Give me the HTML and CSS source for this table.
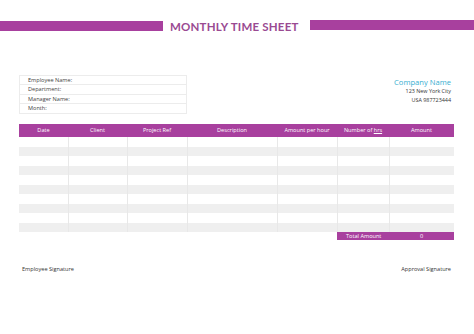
FILE: index.html
```html
<!DOCTYPE html>
<html>
<head>
<meta charset="utf-8">
<link rel="stylesheet" href="styles.css">
</head>
<body>
<div class="page">
  <header class="head">
    <div class="bar bar-left"></div>
    <h1 class="title">MONTHLY TIME SHEET</h1>
    <div class="bar bar-right"></div>
  </header>

  <section class="info">
    <div class="info-box">
      <div class="info-row">Employee Name:</div>
      <div class="info-row">Department:</div>
      <div class="info-row">Manager Name:</div>
      <div class="info-row">Month:</div>
    </div>
    <div class="company">
      <div class="company-name">Company Name</div>
      <div class="company-line">123 New York City</div>
      <div class="company-line">USA 987723444</div>
    </div>
  </section>

  <table class="sheet">
    <colgroup>
      <col class="c-date"><col class="c-client"><col class="c-proj"><col class="c-desc"><col class="c-rate"><col class="c-hrs"><col class="c-amt">
    </colgroup>
    <thead>
      <tr>
        <th>Date</th><th>Client</th><th>Project Ref</th><th>Description</th><th>Amount per hour</th><th>Number of <span class="squig">hrs</span></th><th>Amount</th>
      </tr>
    </thead>
    <tbody>
      <tr><td></td><td></td><td></td><td></td><td></td><td></td><td></td></tr>
      <tr><td></td><td></td><td></td><td></td><td></td><td></td><td></td></tr>
      <tr><td></td><td></td><td></td><td></td><td></td><td></td><td></td></tr>
      <tr><td></td><td></td><td></td><td></td><td></td><td></td><td></td></tr>
      <tr><td></td><td></td><td></td><td></td><td></td><td></td><td></td></tr>
      <tr><td></td><td></td><td></td><td></td><td></td><td></td><td></td></tr>
      <tr><td></td><td></td><td></td><td></td><td></td><td></td><td></td></tr>
      <tr><td></td><td></td><td></td><td></td><td></td><td></td><td></td></tr>
      <tr><td></td><td></td><td></td><td></td><td></td><td></td><td></td></tr>
      <tr><td></td><td></td><td></td><td></td><td></td><td></td><td></td></tr>
    </tbody>
    <tfoot>
      <tr class="total">
        <td class="blank" colspan="5"></td>
        <td class="total-label">Total Amount</td>
        <td class="total-val">0</td>
      </tr>
    </tfoot>
  </table>

  <footer class="signs">
    <span>Employee Signature</span>
    <span>Approval Signature</span>
  </footer>
</div>
</body>
</html>
```

FILE: styles.css
```css
html, body {
  margin: 0;
  padding: 0;
  background: #ffffff;
}

.page {
  width: 474px;
  height: 334px;
  font-family: "Open Sans", "Liberation Sans", sans-serif;
  color: #333333;
}

.head {
  display: flex;
  align-items: flex-start;
  padding-top: 19px;
  height: 14px;
}

.bar {
  background: #a8409e;
  height: 10.5px;
}

.bar-left {
  width: 163px;
  margin-top: 1.5px;
}

.bar-right {
  flex: 1;
  margin-top: 0.5px;
}

.title {
  margin: 0;
  padding: 0 0 0 7px;
  width: 140px;
  font-family: Lato, "Open Sans", sans-serif;
  font-weight: 700;
  font-size: 11.5px;
  line-height: 13px;
  color: #9a4a92;
  letter-spacing: 0.2px;
  white-space: nowrap;
  margin-top: 0.5px;
}

.info {
  display: flex;
  justify-content: space-between;
  align-items: flex-start;
  margin-top: 42px;
  padding: 0 23px 0 19px;
}

.info-box {
  width: 168px;
  border: 1px solid #ececec;
  border-bottom: none;
  box-sizing: border-box;
}

.info-row {
  height: 9.4px;
  line-height: 9.4px;
  font-size: 5.6px;
  padding-left: 8px;
  border-bottom: 1px solid #ececec;
  box-sizing: border-box;
  color: #444444;
}

.company {
  text-align: right;
  margin-top: 2px;
}

.company-name {
  font-size: 7.6px;
  line-height: 10px;
  color: #36aed0;
}

.company-line {
  font-size: 5.4px;
  line-height: 9px;
  color: #333333;
}

.sheet {
  margin: 10px 0 0 19px;
  width: 435px;
  border-collapse: collapse;
  table-layout: fixed;
}

.c-date { width: 49px; }
.c-client { width: 59px; }
.c-proj { width: 60px; }
.c-desc { width: 90px; }
.c-rate { width: 60px; }
.c-hrs { width: 52px; }
.c-amt { width: 65px; }

.sheet th {
  background: #a8409e;
  color: #ffffff;
  font-weight: 400;
  font-size: 5.6px;
  height: 13.5px;
  padding: 0;
  text-align: center;
  white-space: nowrap;
}

.squig {
  text-decoration: underline;
}

.sheet tbody td {
  height: 9.5px;
  padding: 0;
  border-left: 1px solid #e8e8e8;
  box-sizing: border-box;
}

.sheet tbody td:first-child {
  border-left: none;
}

.sheet tbody tr:nth-child(even) td {
  background: #efefef;
}

.total td {
  height: 8px;
  padding: 0;
  font-size: 5.6px;
  line-height: 8px;
}

.total .blank {
  background: transparent;
}

.total-label {
  background: #a8409e;
  color: #ffffff;
  padding-left: 9px !important;
  white-space: nowrap;
}

.total-val {
  background: #a8409e;
  color: #ffffff;
  text-align: center;
}

.signs {
  display: flex;
  justify-content: space-between;
  padding: 0 23px 0 22px;
  margin-top: 25px;
  font-size: 5.6px;
  color: #333333;
}
```
